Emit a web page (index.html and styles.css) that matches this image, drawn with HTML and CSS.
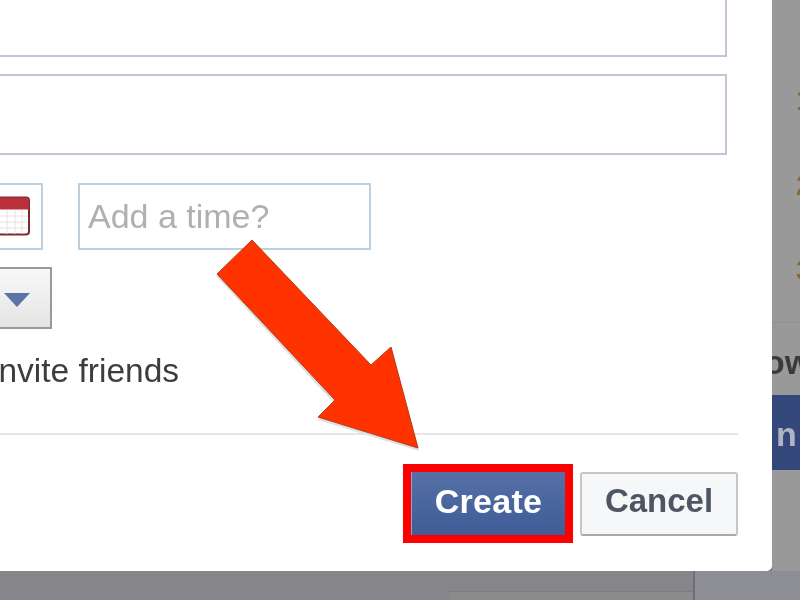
FILE: index.html
```html
<!DOCTYPE html>
<html lang="en">
<head>
<meta charset="utf-8">
<title>Create event</title>
<link rel="stylesheet" href="styles.css">
</head>
<body>
<div class="stage">
  <div class="top">
    <main class="dialog">
      <div class="field field-name"></div>
      <div class="field field-details"></div>
      <div class="when">
        <div class="date-box">
          <svg class="cal" width="31" height="41" viewBox="0 0 31 41" aria-hidden="true">
            <rect x="-6" y="1.5" width="35" height="37" rx="3" fill="#fff" stroke="#7d2a2e" stroke-width="2"/>
            <path d="M-6 4.5a3 3 0 0 1 3-3h29a3 3 0 0 1 3 3v9H-6z" fill="#b8313a"/>
            <path d="M0 20h28M0 26h28M0 32h28M7 14v24M15 14v24M22 14v24" stroke="#e6e2e2" stroke-width="1"/>
          </svg>
        </div>
        <div class="time-box">Add a time?</div>
      </div>
      <div class="select"><span class="caret"></span></div>
      <div class="invite">invite friends</div>
      <div class="rule"></div>
      <div class="actions">
        <div class="create-frame"><button class="btn btn-create">Create</button></div>
        <button class="btn btn-cancel">Cancel</button>
      </div>
    </main>
    <aside class="side">
      <div class="nums"><span>1</span><span>2</span><span>3</span></div>
      <div class="side-word">ow</div>
      <div class="side-bar">n</div>
    </aside>
  </div>
  <div class="bottom">
    <div class="bottom-left"><div class="bottom-inner"></div></div>
    <div class="bottom-right"></div>
  </div>
  <svg class="arrow" width="240" height="240" viewBox="200 230 240 240" aria-hidden="true">
    <polygon points="216,276 334,403 318,420 419,451 392,349 372,368 254,243" fill="#dfdfdf"/>
    <polygon points="252,240 217,274 335,400 318,417 418,448 391,347 371,365" fill="#ff3300" stroke="#b53a1a" stroke-width="1"/>
  </svg>
</div>
</body>
</html>
```

FILE: styles.css
```css
html, body {
  margin: 0;
  padding: 0;
  background: #999;
}

.stage {
  position: relative;
  width: 800px;
  height: 600px;
  overflow: hidden;
  font-family: "Liberation Sans", Arial, sans-serif;
  filter: blur(0.7px);
}

.top {
  display: flex;
  height: 571px;
}

.dialog {
  width: 772px;
  height: 571px;
  box-sizing: border-box;
  flex: none;
  overflow: hidden;
  background: #fff;
  border-radius: 0 0 5px 0;
  box-shadow: 1px 1px 1px #666;
  display: flex;
  flex-direction: column;
  align-items: flex-start;
}

.field {
  width: 727px;
  box-sizing: border-box;
  border: 2px solid #bdc7d8;
  border-left: 0;
}

.field-name {
  height: 57px;
  border-top: 0;
}

.field-details {
  height: 81px;
  margin-top: 17px;
}

.when {
  display: flex;
  gap: 35px;
  margin-top: 28px;
}

.date-box {
  width: 43px;
  height: 67px;
  box-sizing: border-box;
  border: 2px solid #bdd0e0;
  border-left: 0;
  display: flex;
  align-items: center;
}

.cal {
  display: block;
  flex: none;
}

.time-box {
  width: 293px;
  height: 67px;
  box-sizing: border-box;
  border: 2px solid #bdd0e0;
  padding-left: 8px;
  font-size: 34px;
  line-height: 62px;
  color: #b0b0b0;
}

.select {
  width: 52px;
  height: 62px;
  margin-top: 17px;
  box-sizing: border-box;
  border: 2px solid #999;
  border-left: 0;
  background: linear-gradient(#f8f8f8, #e4e4e4);
  display: flex;
  align-items: center;
  padding-left: 4px;
}

.caret {
  width: 0;
  height: 0;
  border-left: 13px solid transparent;
  border-right: 13px solid transparent;
  border-top: 14px solid #5b74a8;
  margin-top: 3px;
}

.invite {
  margin-top: 23px;
  margin-left: -9px;
  font-size: 33.5px;
  line-height: 37px;
  color: #3d3d3d;
}

.rule {
  width: 738px;
  height: 2px;
  margin-top: 44px;
  background: #e6e6e6;
}

.actions {
  display: flex;
  align-items: center;
  gap: 7px;
  margin-top: 29px;
  margin-left: 403px;
}

.create-frame {
  border: 8px solid #f00;
  display: flex;
}

.btn {
  display: block;
  font-family: inherit;
  font-weight: bold;
  cursor: pointer;
}

.btn-create {
  width: 154px;
  height: 63px;
  padding: 0 0 5px;
  border: 0;
  border-left: 1px solid #8fa4cc;
  background: linear-gradient(#5670a6, #3f5c98);
  color: #fff;
  font-size: 34px;
  letter-spacing: 0.3px;
}

.btn-cancel {
  width: 158px;
  height: 64px;
  padding: 0 0 5px;
  border: 2px solid #c6c6c6;
  border-bottom-color: #aaa;
  border-radius: 3px;
  background: #f6f7f9;
  color: #4e5665;
  font-size: 33px;
}

.side {
  flex: 1;
  min-width: 0;
  overflow: hidden;
  background: #999;
  display: flex;
  flex-direction: column;
  box-sizing: border-box;
}

.nums {
  display: flex;
  flex-direction: column;
  gap: 55px;
  margin-top: 85px;
  padding-left: 24px;
  font-size: 30px;
  line-height: 30px;
  font-weight: bold;
  color: #86683a;
  height: 228px;
}

.side-word {
  margin-top: 9px;
  border-top: 1px solid #8f8f8f;
  padding-top: 21px;
  margin-left: -8px;
  font-size: 34px;
  line-height: 37px;
  font-weight: bold;
  color: #3a3a3a;
  white-space: nowrap;
}

.side-bar {
  margin-top: 14px;
  height: 75px;
  background: #34477a;
  color: #aeb4c4;
  font-size: 34px;
  font-weight: bold;
  line-height: 78px;
  padding-left: 4px;
}

.bottom {
  display: flex;
  height: 29px;
}

.bottom-left {
  width: 695px;
  background: #85858a;
  border-right: 2px solid #6e6e74;
  padding-top: 20px;
  padding-left: 60px;
  box-sizing: border-box;
}

.bottom-inner {
  height: 9px;
  background: #8b8b8e;
  border-top: 1px solid #7c7c80;
  margin-left: 390px;
}

.bottom-right {
  flex: 1;
  background: #8d8d96;
}

.arrow {
  position: absolute;
  left: 200px;
  top: 230px;
}
```
